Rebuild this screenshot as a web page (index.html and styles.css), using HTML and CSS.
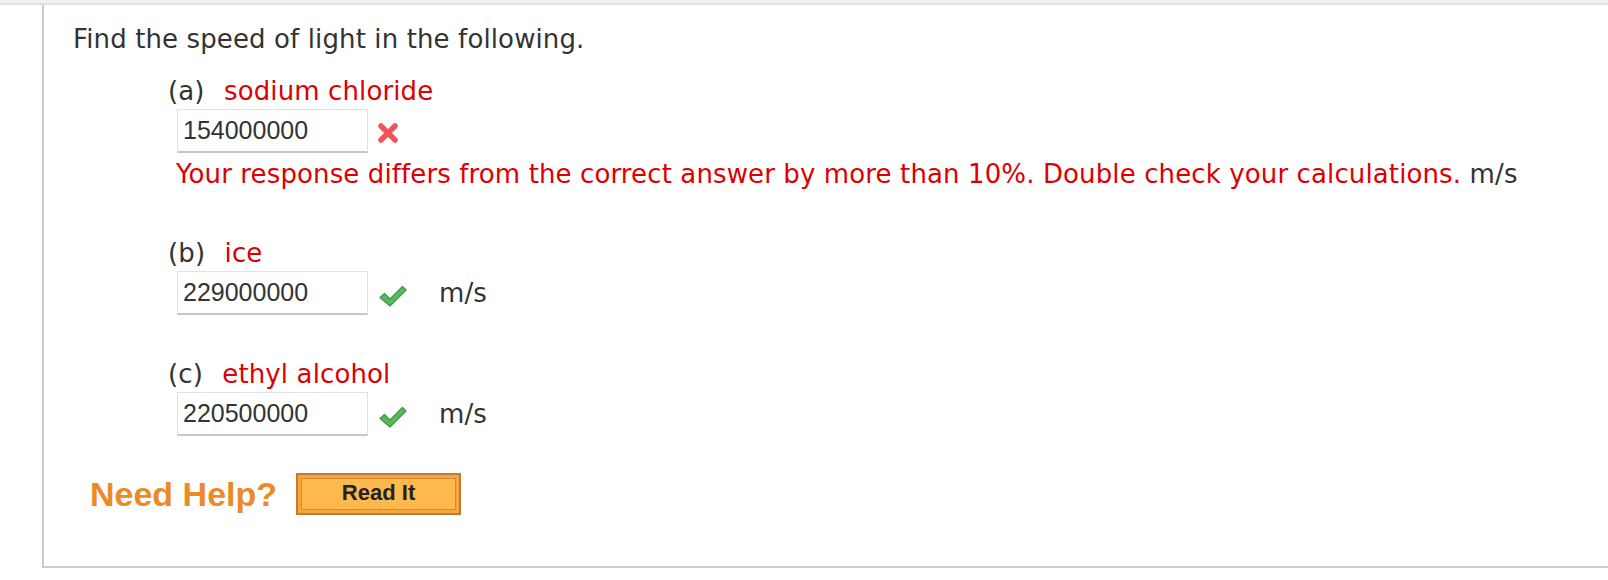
FILE: index.html
```html
<!DOCTYPE html>
<html lang="en">
<head>
    <meta charset="UTF-8">
    <link rel="stylesheet" href="styles.css">
    <title>Speed of light</title>
</head>
<body>
    <div class="topbar"></div>
    <div class="question">
        <p class="prompt">Find the speed of light in the following.</p>
        <div class="part">
            <div class="label">(a) <span class="red">sodium chloride</span></div>
            <div class="answer">
                <input class="in" type="text" value="154000000">
                <svg class="mark" width="22" height="22" viewBox="0 0 22 22">
                    <path d="M4 4 L18 18 M18 4 L4 18" stroke="#f2545e" stroke-width="5.5" stroke-linecap="round"/>
                </svg>
            </div>
            <div class="feedback"><span class="red">Your response differs from the correct answer by more than 10%. Double check your calculations.</span> m/s</div>
        </div>
        <div class="part">
            <div class="label">(b) <span class="red">ice</span></div>
            <div class="answer">
                <input class="in" type="text" value="229000000">
                <svg class="mark check" width="30" height="24" viewBox="0 0 30 24">
                    <path d="M2 13.5 L6.5 9.5 L12 15 L24.5 2.5 L28 6 L12 22 Z" fill="#5cb85f" stroke="#3f9a45" stroke-width="1.3" stroke-linejoin="round"/>
                </svg>
                <span class="unit">m/s</span>
            </div>
        </div>
        <div class="part">
            <div class="label">(c) <span class="red">ethyl alcohol</span></div>
            <div class="answer">
                <input class="in" type="text" value="220500000">
                <svg class="mark check" width="30" height="24" viewBox="0 0 30 24">
                    <path d="M2 13.5 L6.5 9.5 L12 15 L24.5 2.5 L28 6 L12 22 Z" fill="#5cb85f" stroke="#3f9a45" stroke-width="1.3" stroke-linejoin="round"/>
                </svg>
                <span class="unit">m/s</span>
            </div>
        </div>
        <div class="help">
            <span class="need">Need Help?</span>
            <button class="btn"><span class="btn-in">Read It</span></button>
        </div>
    </div>
</body>
</html>
```

FILE: styles.css
```css
body {
  margin: 0;
  background: #fff;
  font-family: "DejaVu Sans", Verdana, sans-serif;
  font-size: 26px;
  letter-spacing: 0.12px;
  color: #333;
}
.topbar {
  height: 3px;
  background: #f1f1f1;
  border-bottom: 2px solid #e0e0e0;
}
.question {
  margin-left: 42px;
  height: 563px;
  box-sizing: border-box;
  border-left: 2px solid #ccc;
  border-bottom: 2px solid #ccc;
  padding: 17px 0 0 29px;
}
.prompt {
  margin: 0;
  line-height: 34px;
}
.part {
  margin: 18px 0 0 95px;
}
.part + .part {
  margin-top: 42px;
}
.label {
  line-height: 35px;
}
.label .red {
  margin-left: 11px;
}
.red {
  color: #dd0000;
}
.answer {
  display: flex;
  align-items: center;
  margin: 0 0 0 9px;
}
.in {
  width: 191px;
  height: 44px;
  box-sizing: border-box;
  border: 1px solid #e2e2e2;
  border-bottom: 2px solid #c6c6c6;
  padding: 0 5px;
  font-family: "Liberation Sans", Arial, sans-serif;
  font-size: 25px;
  letter-spacing: 0;
  color: #333;
}
.mark {
  margin-left: 9px;
  margin-top: 4px;
}
.check {
  margin-left: 10px;
  margin-top: 6px;
}
.unit {
  margin-left: 31px;
}
.feedback {
  margin: 4px 0 0 8px;
  padding-bottom: 3px;
  line-height: 34px;
}
.help {
  display: flex;
  align-items: center;
  margin: 37px 0 0 17px;
}
.need {
  font-family: "Liberation Sans", Arial, sans-serif;
  font-weight: bold;
  font-size: 34px;
  letter-spacing: 0;
  color: #ee8a26;
}
.btn {
  margin-left: 19px;
  width: 165px;
  height: 42px;
  padding: 3px;
  border: 2px solid #c8782e;
  background: #f6a63e;
  cursor: pointer;
}
.btn-in {
  display: block;
  height: 100%;
  box-sizing: border-box;
  border: 1px solid #c98a3c;
  background: #fdb84e;
  font-family: "Liberation Sans", Arial, sans-serif;
  font-weight: bold;
  font-size: 22px;
  letter-spacing: 0;
  line-height: 28px;
  color: #222;
}
```
